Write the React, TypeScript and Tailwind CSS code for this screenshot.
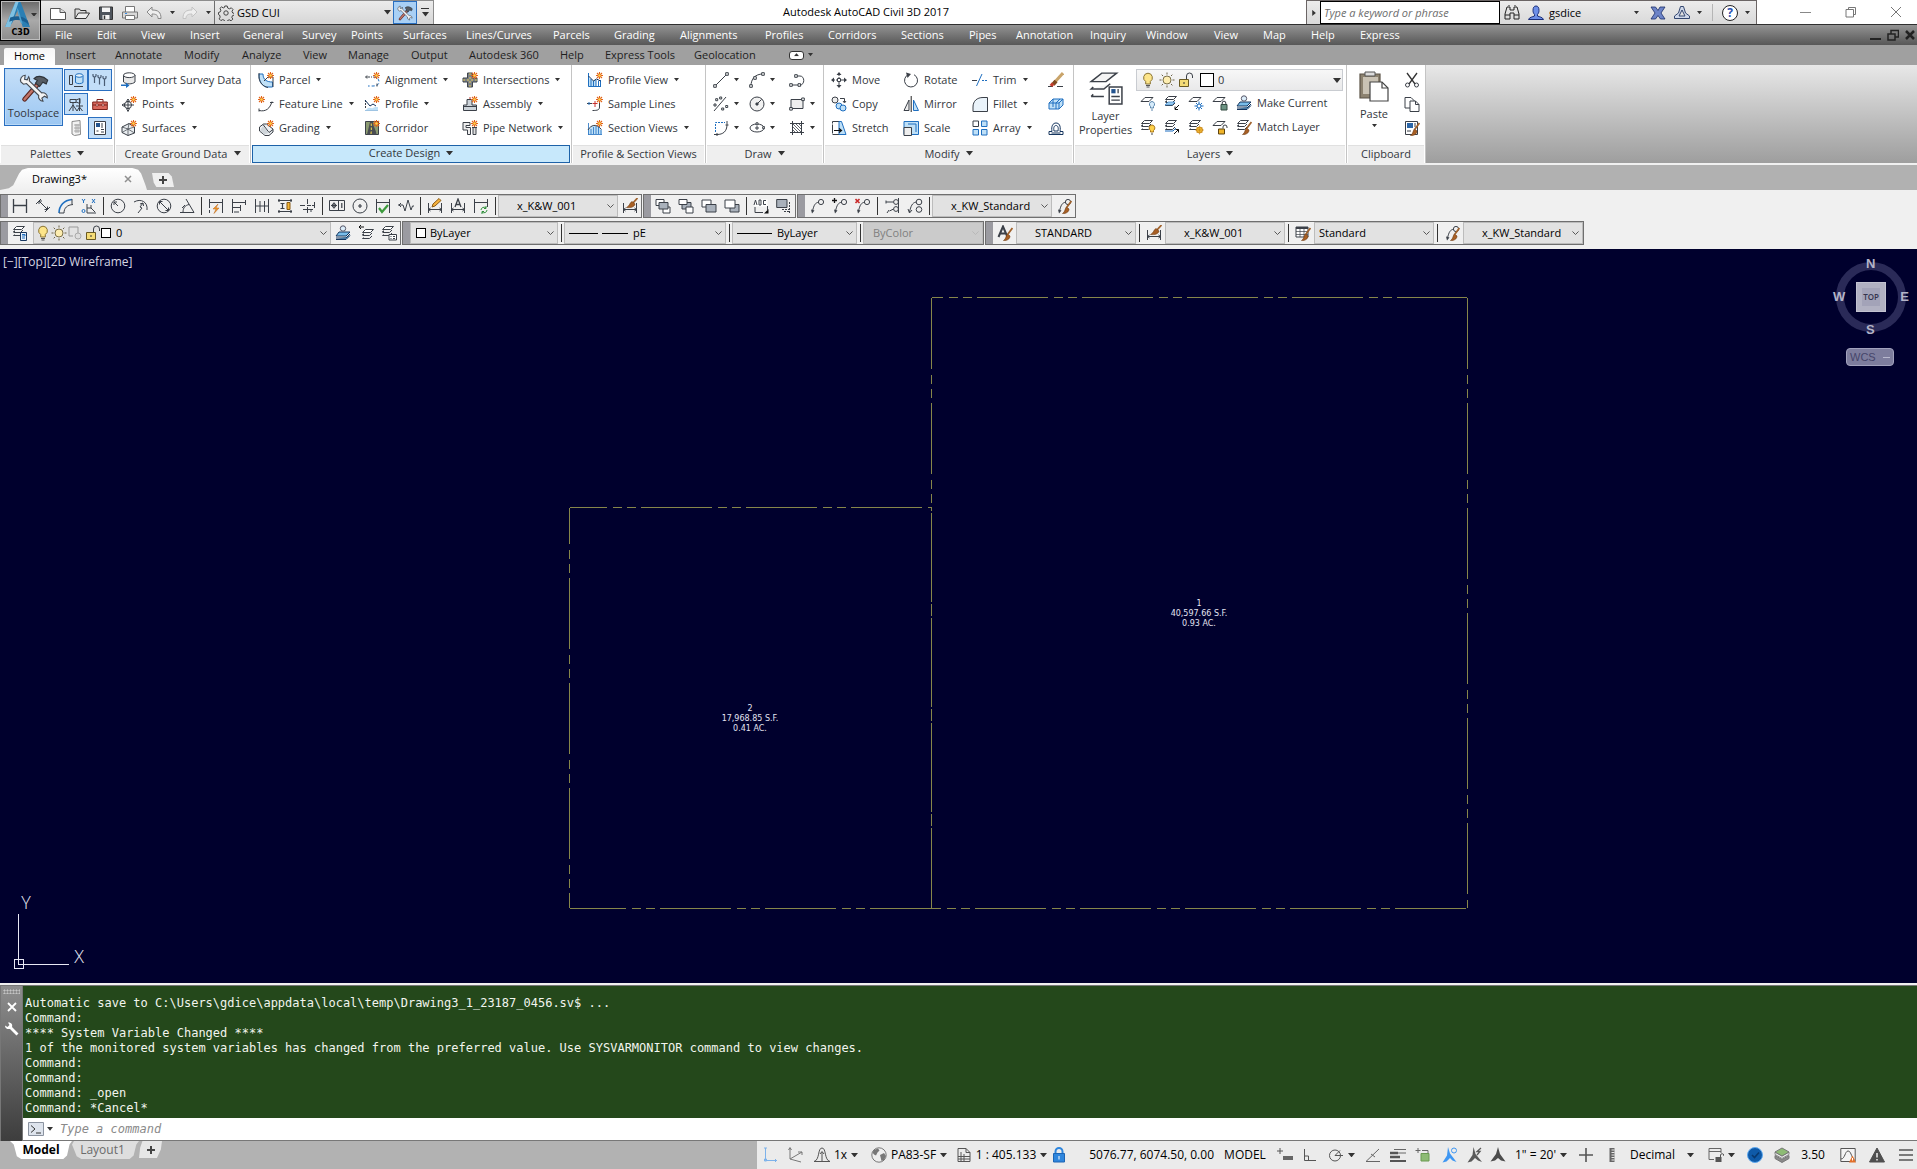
import React from "react";

const D = "#3b4048";
const B = "#1f6fc0";
const L = "#bfe0f7";

/* Orange "new object" burst drawn in the upper right of creation icons. */
const Star = () => (
  <g>
    <path d="M12.5 0v7M9 3.5h7M10 1l5 5M15 1l-5 5" stroke="#e2641a" strokeWidth="1.1" />
    <circle cx="12.5" cy="3.5" r="1.3" fill="#ffd24a" stroke="none" />
  </g>
);

const Sheets = ({ dy = 0 }: { dy?: number }) => (
  <g transform={`translate(0 ${dy})`}>
    <path d="M4.5 2.5h8l-3 3h-8z" fill="#fff" />
    <path d="M3 7.5H1.5l1-1M1.5 8.5h7l2.5-2.5M1.5 11.5h7l2.5-2.5M1.5 11.5l1-1" />
  </g>
);

const Brush = () => (
  <g>
    <path d="M15.5 3L11 9" stroke="#a0622c" strokeWidth="1.8" />
    <path d="M6.5 15.500c3.500 .3 6.500-1.500 6.500-4.500l-2.500-2.200c-1.800 2-1 4.700-4 6.700z" fill="#a85f24" stroke="#6d3a12" strokeWidth=".6" />
  </g>
);

const Key = () => (
  <g>
    <circle cx="12" cy="4" r="2.600" />
    <path d="M9.500 4.200C6 5 5 7 3.500 13" />
    <path d="M2 11.500l1 4 2.500-3z" fill={D} stroke="none" />
  </g>
);

const Dim = () => <path d="M1.500 5v10M14.500 5v10M1.500 11.500h13M3.500 10l-2 1.500 2 1.500M12.500 10l2 1.500-2 1.500" />;

const shapes: Record<string, React.ReactNode> = {
  newFile: <><path d="M.5 3.500H10l5.500 4V14.500H.5z" fill="#fff" stroke="#555" /><path d="M10 3.500v4h5.500" fill="#ddd" stroke="#555" /></>,
  open: <><path d="M1 13.500V4h4.500l1 1.500H12V8" fill="#ddd" stroke="#333" /><path d="M1 13.500L4.500 8H15.500l-3.500 5.500z" fill="#eee" stroke="#333" /></>,
  save: <><path d="M1.500 2h13v12.500h-13z" fill="#4e545c" stroke="#333" /><path d="M4 2.500h8v4.500H4zM4.500 10h7v4.500h-7z" fill="#f4f4f4" stroke="none" /><path d="M6.500 10.500v3.500" stroke="#333" strokeWidth="1.500" /></>,
  print: <><path d="M3.500 7V1.500h9V7" fill="#fff" stroke="#777" /><path d="M.5 7h15v6H.5z" fill="#d8d8d8" stroke="#777" /><path d="M3.500 10.500h9v4h-9z" fill="#fff" stroke="#777" /><path d="M3 8.500h2" stroke="#3a8be0" /></>,
  undo: <path d="M1 7l5-5v3c6 0 9 2 9 8.500h-3c0-3.500-2-4.500-6-4.500v3z" fill="#eee" stroke="#888" />,
  redo: <path d="M15 7l-5-5v3c-6 0-9 2-9 8.500h3c0-3.500 2-4.500 6-4.500v3z" fill="#eee" stroke="#c3c3c3" />,
  gear: <><circle cx="8" cy="8" r="2.200" stroke="#444" /><path d="M6.800 1h2.400l.5 2 1.800.8 1.800-1 1.700 1.700-1 1.800.7 1.700 1.800.5v1.500l-2 .6-.7 1.700 1 1.800-1.700 1.700-1.800-1-1.700.7-.6 1.500H7l-.6-1.700-1.700-.7-1.800 1-1.700-1.700 1-1.800L1.500 10 .5 9.500V7.500l1.700-.6.7-1.700-1-1.800 1.600-1.500 1.800 1 1.200-.5z" stroke="#444" /></>,
  tools: (
    <>
      <path d="M3 14L10 6" stroke="#5a2620" strokeWidth="2.600" strokeLinecap="round" />
      <path d="M3 14L10 6" stroke="#c27468" strokeWidth="1.400" strokeLinecap="round" />
      <path d="M8 3C9.500 1.300 12.500 1.200 15.300 3.800l-.8 2-1.800-.9-1.700 2.300L8.800 5.400 9.800 4z" fill="#565c64" stroke="#2f343a" strokeWidth=".6" />
      <path d="M3.300 1.200A2.600 2.600 0 0 0 1 4.800L2.400 6 4 5.600 10.500 12a2.400 2.400 0 0 0 2.300 3l-.6-1.600 1.400-1 1.500.8a2.400 2.400 0 0 0-3-2.600L5.500 4.200a2.600 2.600 0 0 0-.3-2.200L4.400 3.600 3 3.300z" fill="#f4f4f4" stroke="#444a52" strokeWidth=".6" />
    </>
  ),
  prospector: <><path d="M1.500 3.500h3v9h-3zM6 14.500h9" /><path d="M7.500 3.500v7c2 1.500 5.500 1.500 7.500 0v-7" fill={L} stroke={B} /><ellipse cx="11.200" cy="3.500" rx="3.700" ry="1.800" fill="#e6f4fd" stroke={B} /></>,
  wrenches: <path d="M1 2v2l1.500 1.500L4 4V2M2.500 5.500V11M6 3v2l1.500 1.500L9 5V3M7.500 6.500V12.500M11 4v2l1.500 1.500L14 6V4M12.500 7.500V14" strokeWidth="1.200" stroke="#4a5c74" />,
  survey: <><path d="M2 3.500h6v3H2zM8 4l4-1.500v5L8 6M5 6.500V9M1 15l4-6 4 6M5 9v6M8 10h7M11.500 3v12M9 15l2.500-4 3 4" /></>,
  toolbox: <><path d="M.7 6h14.600v7.500H.7z" fill="#d9685c" stroke="#7d231c" /><path d="M5 6V3.500h6V6M.7 9h14.600" stroke="#7d231c" /><path d="M4 8h2v2H4zM10 8h2v2h-2z" fill="#f7dfda" stroke="#7d231c" strokeWidth=".6" /></>,
  calc: <><path d="M4 1.500l8-1 .5 14-6 1-2.500-1.500z" fill="#f2f2f2" stroke="#888" /><path d="M6 5h6M6 8h6M6 11h6M8 4v9M10 4v9" stroke="#999" strokeWidth=".8" /></>,
  props: <><path d="M2.500 1.500h11v13h-11z" fill="#fff" /><path d="M4 3h4v4H4z" fill="#23548f" stroke="none" /><path d="M10 3v5M4.500 11h2M9 9.500h3M9 12h3" /></>,
  importSurvey: <><path d="M2.500 3v7c2.500 2.500 9 2.500 11.500 0V3" fill="#e8e8e8" /><ellipse cx="8.200" cy="3.200" rx="5.700" ry="2.400" fill="#fff" /><path d="M0 12.500h5v-2l3.500 3L5 16v-2H0z" fill={B} stroke="none" /></>,
  points: <><circle cx="7" cy="9" r="3.500" /><path d="M7 3v12M1 9h12" /><path d="M5.500 5.500L7 3l1.500 2.500zM3.500 7.500L1 9l2.500 1.500zM5.500 12.500L7 15.500l1.500-3z" fill="#fff" /><Star /></>,
  surfaces: <><path d="M1 7l7-3.500 5.500 3.500V13L7 15.500 1 12.500z" fill="#e8ecef" /><path d="M1 7l6 2 6.500-2M7 9v6.500M7 9l1-5.500M1 12.500L7 9l6.500 4" strokeWidth=".7" /><Star /></>,
  parcel: <><path d="M1 2h4c0 6 4 8 9.500 8v5H8C3 13 1 9 1 2z" fill={L} stroke={B} /><path d="M1 1v5c1 5 4 8.500 9 9.500M6 9l4-4h5v10" /><Star /></>,
  featureLine: <><path d="M1 14.500c7 1.500 11-2 13-9M1 12.500v3M12 6.500h3.500" /><g transform="translate(-9 0)"><Star /></g></>,
  grading: <><path d="M1.500 7l4-3h3l6.500 5v3l-4 3.500H7L1.500 11z" fill="#eef1f4" /><path d="M5 4.500l6 8M11 12.500l4-3" /><path d="M5 6l6 7-5 1.500-4-4z" fill="#d0d6db" stroke="none" /><Star /></>,
  alignment: <><path d="M1 5h7" strokeDasharray="2 1" /><path d="M9 5c4 0 6 2 6 5s-3 4-6 4H4" stroke={B} strokeDasharray="3 2" /><path d="M3 3.500v3M13 11.500v3" /><Star /></>,
  profile: <><path d="M1.500 4v9" strokeDasharray="2 1" /><path d="M1 4l5 6 3-2 3 2" stroke="#11315c" /><path d="M2 14c3-4 5-1 7-2 2-1.500 3-1 5-1v4H2z" fill={L} stroke="none" /><path d="M1 14.500h13" stroke="#9ec4e3" /><Star /></>,
  corridor: <><path d="M1.500 1.500h13v13h-13z" fill="#8b9a70" /><path d="M3 14.500L6 2h3c0 5 3 7 3.500 12.500z" fill="#4a4d52" stroke="none" /><path d="M7 14c.5-4 .3-8 .2-11" stroke="#ffe04a" strokeDasharray="2.500 1.500" /><Star /></>,
  intersections: <><path d="M5.500 1v5H1v4h4.500v5h5v-5H15V6h-4.500V1z" fill="#7b8087" stroke="#3f444a" /><path d="M8 1v14M1 8h14" stroke="#ffe04a" strokeDasharray="2 2" strokeWidth=".8" /><Star /></>,
  assembly: <><path d="M8 1v14" stroke="#c23a2c" /><path d="M5 3.500h5V9h4.500v5.500H1.500V9H5z" fill="#cdd4da" /><path d="M1.500 10.500h13" /><Star /></>,
  pipe: <><path d="M1 2.500h7v3H4v2h4.500v7h-3V10H1z" fill="#eee" /><path d="M10 7.500h5M11 7.500v7h3v-7" fill="#ddd" /><Star /></>,
  profileView: <><path d="M1 5l5 4 3-2v7.500H1z" fill={L} stroke="none" /><path d="M1.500 1v13.500H14M4 7v7M6.500 9v5M9 8v6M11.500 9v5M13.500 8v6" stroke={B} /><path d="M1.500 4l5 5 3-2 4 2" stroke="#11315c" /><Star /></>,
  sampleLines: <><path d="M0 7.500h5M12.500 7v4c0 3-2 3.500-7 3.500" /><path d="M5.500 7.500h5M8 5v6" stroke="#c9302c" /><path d="M2 9v-3" stroke={B} /><Star /></>,
  sectionViews: <><path d="M1 14.500V10c2-4.500 6-5 8-5 3 1 5 3 6 6v3.500z" fill={L} stroke="none" /><path d="M1.500 14.500V3M1 14.500h14M4 9v5M6.500 7v7M9 6v8M11.500 7v7M14 10v4" stroke={B} strokeWidth=".8" /><path d="M1 10C4 5 9 3 14.500 9.500" /><Star /></>,
  line: <><path d="M2 14L14 2" /><path d="M.7 12.700h2.600v2.600H.7zM12.700.7h2.600v2.600h-2.600z" fill="#fff" /></>,
  arc: <><path d="M2 14C2 7 6 2 14 2" /><path d="M.7 12.700h2.600v2.600H.7zM12.700.7h2.600v2.600h-2.600zM4.700 4.700h2.600v2.600H4.700z" fill="#fff" /></>,
  polyline: <><path d="M2 13h9c5 0 5-9 0-9H7" /><path d="M.7 11.700h2.600v2.600H.7zM9 11.700h2.600v2.600H9zM5.700 2.700h2.600v2.600H5.700z" fill="#fff" /></>,
  pointsLine: <><path d="M1 15L13 1" /><path d="M2.700 2.700h2v2h-2zM6.700 1h2v2h-2zM12.700 9.500h2v2h-2zM8.700 12h2v2h-2zM1 8h2v2H1z" fill="#fff" /></>,
  circle: <><circle cx="8" cy="8" r="7" fill="#f1f1f1" /><path d="M8 8l4.500-4.500" /><path d="M7 7h2v2H7z" fill={D} /></>,
  rect: <><path d="M2 3.500h12v9H2z" fill="#eee" /><path d="M.7 11.500h2.600v2.600H.7zM12.700 2h2.600v2.600h-2.600z" fill="#fff" /></>,
  curveTools: <><path d="M2.500 12V2.500H12" stroke={B} strokeDasharray="2 1" /><path d="M1 14.500h3c6 0 10-3 10-10V1M12.500 5h3M4 13v3" /></>,
  ellipse: <><ellipse cx="8" cy="8" rx="7" ry="4" /><path d="M8 6v4M6 8h4" /><path d="M13.700 6.700h2v2h-2zM7 2.800h2v2H7z" fill="#fff" /></>,
  hatch: <><path d="M3.500 1v14M12.500 1v14M1 3.500h14M1 12.500h14" /><path d="M4 7l5 5M4 4l8 8M7 4l5 5M4 10l2 2M10 4l2 2" strokeWidth=".8" /></>,
  move: <><path d="M6.500 6.500h3v3h-3z" /><path d="M8 1v5M8 10v5M1 8h5M10 8h5" strokeDasharray="3 1" /><path d="M8 0l2.500 3h-5zM8 16l2.500-3h-5zM0 8l3-2.500v5zM16 8l-3-2.500v5z" fill={D} stroke="none" /></>,
  copy: <><circle cx="4" cy="4" r="3" fill="#eee" /><circle cx="8" cy="10" r="3" fill={L} stroke={B} /><circle cx="12" cy="12" r="3" fill={L} stroke={B} /><path d="M9 2.500h4.500V6M12 5l1.500 2L15 5" /></>,
  stretch: <><path d="M1.500 1.500h8v13h-8z" fill="#fff" strokeDasharray="9 1" /><path d="M8 1.500h2.500l4.500 13H8z" fill={L} stroke={B} /><path d="M3 10.500h7M8 8.500l2.500 2L8 12.500" stroke="#111" strokeWidth="1.200" /></>,
  rotate: <><path d="M5.500 2.500a6.500 6.500 0 1 0 5.500.2" /><path d="M3 .5l5 1.500-3.500 4z" fill={D} stroke="none" /></>,
  mirror: <><path d="M6 4v10.500H1z" fill="#eee" /><path d="M10.500 4v10.500h5z" fill={L} stroke={B} /><path d="M8.200 0v16" stroke="#222" /></>,
  scale: <><path d="M1 1.500h14.500v13H1z" fill={L} stroke={B} /><path d="M1 7.500h7.500v8H1z" fill="#eee" /><path d="M5 4h8v8" stroke={B} /></>,
  trim: <><path d="M0 8.500h5" /><path d="M4.500 14L10 2" stroke={B} /><path d="M10 8.500h6" stroke={B} strokeDasharray="2 1" /></>,
  fillet: <path d="M1 15.500V11C1 5 5 1.500 11 1.500h4.500v14z" fill="#eaf3fa" />,
  array: <><path d="M1 1h5.500v5.500H1z" fill="#fff" /><path d="M9.500 1H15v5.500H9.500zM1 9.500h5.500V15H1zM9.500 9.500H15V15H9.500z" fill={L} stroke={B} /></>,
  erase: <><path d="M0 14.500h5M9 14.500h6" /><path d="M15 1L6 11" stroke="#c9a46a" strokeWidth="3" /><path d="M8 9l-3 3.500" stroke="#7e4a20" strokeWidth="4" /><path d="M5 11.500l-2 2.500" stroke="#c43c2c" strokeWidth="3.500" /></>,
  explode: <><path d="M1 7l4-4h10v6l-4 4H1z" fill={L} stroke={B} /><path d="M1 7h10v6M11 7l4-4M5 3v8M8 13V7l4-4" stroke={B} /></>,
  offset: <path d="M1 14.500h14v-3h-3c1-6-1-8.500-4-8.500S3 6 4 11.500H1zM3.500 13h9M6 11c-.8-4 .5-5.500 2-5.500s2.800 1.500 2 5.500z" stroke="#16365f" />,
  layerProps: <><path d="M6 1h7L8 5H1zM4 8.500H1l1-1M1 8.500h6l3-2.500M1 12h6M1 12l1-1" fill="#f4f4f4" strokeWidth=".7" /><path d="M9.500 7.500h6v8h-6z" fill="#fff" strokeWidth=".7" /><path d="M10.500 8.500h2v2h-2z" fill="#23548f" stroke="none" /><path d="M13.700 8.500v2M10.500 12h4M10.500 13.700h4" strokeWidth=".6" /></>,
  bulb: <><path d="M8 1.200a4.500 4.500 0 0 0-2.300 8.300V12h4.600V9.500A4.500 4.500 0 0 0 8 1.200z" fill="#fde58a" stroke="#8a7434" /><path d="M6 13.500h4M6.500 15h3" stroke="#555" /></>,
  sun: <><circle cx="8" cy="8" r="4" fill="#fdedb0" stroke="#7c7048" /><path d="M8 .5v2M8 13.500v2M.5 8h2M13.500 8h2M2.700 2.700l1.400 1.400M12 12l1.400 1.400M13.300 2.700L12 4M4 12l-1.300 1.300" stroke="#6b6246" /></>,
  unlock: <><path d="M1.500 7.500h9v7h-9z" fill="#f5dc76" stroke="#6a5a22" /><path d="M8.500 7V4a3 3 0 0 1 6 0v2" /><path d="M6 10v2" stroke="#333" /></>,
  vpFreeze: <><path d="M2 2h9v6M2 2v9h4" stroke="#999" /><circle cx="11" cy="11" r="3" fill="#ddd" stroke="#aaa" /></>,
  layOff: <><path d="M5 2.500h8l-4 4H1z" fill="#fff" /><path d="M12 6.500a2.800 2.800 0 0 0-1.500 5V13h3v-1.500a2.800 2.800 0 0 0-1.500-5zM11 15h2" fill="#d7ecfb" stroke="#5a86ad" /></>,
  layIso: <><Sheets dy={-1} /><path d="M4 7h7l-3 3H1z" fill="#9ccdf0" stroke={B} strokeWidth=".6" /><path d="M15 10l-4 4M11 11.500V14.500h3" stroke="#111" /></>,
  layFreeze: <><path d="M5 2.500h8l-4 4H1z" fill="#fff" /><path d="M11 6.500v9M6.500 11h9M8 8l6 6M14 8l-6 6" stroke={B} /><circle cx="11" cy="11" r="2" fill="#fff" stroke={B} /></>,
  layLock: <><path d="M5 2.500h8l-4 4H1z" fill="#fff" /><path d="M9 9.500h6v5.500H9z" fill="#6d9484" stroke="#324a40" /><path d="M10.200 9V8a1.800 1.800 0 0 1 3.600 0v1" /></>,
  makeCurrent: <><path d="M4 7h11l-4 4H1zM1 14.500h10l4-4" fill="#79bdea" stroke="#16365f" /><path d="M1 13h10l4-4" stroke="#16365f" /><circle cx="8" cy="3.500" r="2.700" fill="#dceefb" stroke="#556" /></>,
  layOn: <><Sheets dy={-1} /><path d="M12 6a3 3 0 0 0-1.500 5.500V13h3v-1.500A3 3 0 0 0 12 6z" fill="#ffd24a" stroke="#a8761a" /><path d="M11 15h2" /></>,
  layUniso: <><Sheets dy={-1} /><path d="M1 12h8l3-3" stroke={B} /><path d="M10 15l4.500-4.500M11.500 10.500h3v3" stroke="#111" /></>,
  layThaw: <><Sheets dy={-1} /><circle cx="11.500" cy="11" r="3" fill="#ffc83c" stroke="#c8861a" /><path d="M11.500 6.500v9M7 11h9M8.500 8l6 6M14.500 8l-6 6" stroke="#c8861a" strokeWidth=".6" /></>,
  layUnlock: <><path d="M5 2.500h8l-4 4H1z" fill="#fff" /><path d="M6.500 10h6v5h-6z" fill="#f0b429" stroke="#5e4410" /><path d="M11 9.500V8a2 2 0 0 1 4 0v1" /></>,
  matchLayer: <><Sheets dy={-1} /><Brush /></>,
  paste: <><path d="M1 2h10v12H1z" fill="#8c8270" stroke="#5b5346" strokeWidth=".6" /><path d="M3.500 1h5v2h-5z" fill="#ddd" stroke="#555" strokeWidth=".5" /><path d="M2.500 3.500h7.500V12H2.500z" fill="#c9c2b4" stroke="none" /><path d="M6 6h6l3 3v6.500H6z" fill="#fff" stroke="#444" strokeWidth=".6" /><path d="M12 6v3h3" stroke="#444" strokeWidth=".6" /></>,
  cut: <><path d="M3 1l8 11M13 1L5 12" stroke="#333" strokeWidth="1.300" /><circle cx="3.500" cy="13" r="2" /><circle cx="12.500" cy="13" r="2" /></>,
  copyClip: <><path d="M1 1.500h6l3 3V12H1z" fill="#fff" /><path d="M6 5h5.500l3.500 3.500v7H6z" fill="#fff" /><path d="M11.500 5v3.500H15" /></>,
  pasteSpec: <><path d="M1.500 1.500h12v13h-12z" fill="#fff" /><path d="M3 3h6v5H3z" fill="#2b66a8" stroke="none" /><path d="M11 3v4M3 11h4" /><Brush /></>,
  dimLinear: <path d="M1.500 1v14M14.500 1v14M2 7.500h12" strokeWidth="1.300" />,
  dimAligned: <path d="M4 3l8.500 8.500M1 6l5-5M10 14l5-5M4 3v3M4 3h3M12.500 11.500v-3M12.500 11.500h-3" />,
  dimArc: <><path d="M1 15C1 8 6 2 14 1.500" stroke={B} strokeWidth="1.600" /><path d="M6 15c0-5 3-8 9-8.500M1 15h5M14 1v5" /></>,
  dimOrd: <><path d="M1 1l1.500 2L4 1M2.500 3v2M11 1l3 4M14 1l-3 4" stroke={B} /><circle cx="2.500" cy="13" r="1.500" stroke={B} /><path d="M6 6v9h9M6 10h4v-3M10 10l4 4" /></>,
  dimRadius: <><circle cx="8" cy="8" r="6.800" /><path d="M8 8L4 4M4 7V4h3" /></>,
  dimJog: <path d="M1 4c7-4 14 0 13 8M5 15l4-5-2-1 3-4M7 6l3-1 .5 3" />,
  dimDia: <><circle cx="8" cy="8" r="6.800" /><path d="M3.500 3.500l9 9M3.500 6.500v-3h3M12.500 9.500v3h-3" /></>,
  dimAng: <path d="M1 14.500h14L7 1M4 14.500c0-5 2-7 6-8M3 10l3-3" />,
  quickDim: <><path d="M1.500 1v9M14.500 1v14M1.500 4.500h13M1.500 12v3" /><path d="M10 6l-5 5h3l-2 4.500 5-5.500H8z" fill="#f2992a" stroke="#b8641a" strokeWidth=".5" /></>,
  dimBase: <path d="M1.500 1v14M1.500 4.500h13M1.500 9.500h8M9.500 7v6M14.500 2v5M3 14h5" />,
  dimCont: <path d="M1.500 1v14M6 3v11M10.500 3v11M14.500 1v14M1 8h14" />,
  dimSpace: <><path d="M1 2.500h14M1 13.500h14M2 1v3M14 1v3M2 12v3M14 12v3M3.500 5.500h4M5.500 5.500v5M3.500 10.500h4" strokeWidth="1.200" /><path d="M10 4.500h3v7h-3z" fill="#f2b434" stroke="#8a5a12" /></>,
  dimBreak: <path d="M0 7.500h5M7 7.500h4M12 7.500h3M7.500 1v5M7.500 9v6M11 11v3M3 11.500h10M14.500 4v6" />,
  tolerance: <><path d="M.5 2.500h15v10H.5zM9.500 2.500v10" /><circle cx="5" cy="7.500" r="1.900" /><path d="M5 4.500v6M2 7.500h6M12.800 5v5" strokeWidth="1.200" /></>,
  center: <><circle cx="8" cy="8" r="7" /><path d="M8 6v4M6 8h4" strokeWidth="1.200" /></>,
  inspect: <><path d="M1.500 1v14M14.500 1v14M1.500 4.500h13" /><path d="M4 10l3 4 6-7" stroke="#3c9a3c" strokeWidth="2.200" /></>,
  jogged: <path d="M0 7h5l2 6 3-11 3 10 1.500-4H16M3 5L1 7l2 2" />,
  dimEdit: <><Dim /><path d="M5 9l1-3 6-5.500 2 2L8 8z" fill="#f6b23e" stroke="#8a5a12" /></>,
  dimText: <><Dim /><path d="M5 9l3-8 3 8M6 6.500h4" strokeWidth="1.300" /></>,
  dimUpdate: <><path d="M1.500 1v14M14.500 1v8M1.500 4.500h13" /><path d="M8 12a3 3 0 0 1 5-2M14 12a3 3 0 0 1-5 2M13 8v2.500h-2M9 16v-2.500h2" stroke="#2f8f3a" /></>,
  dimStyle: <><Dim /><path d="M15.500 0L11 5" stroke="#a0622c" strokeWidth="1.800" /><path d="M4.500 9.500c4 .5 8-.5 8.500-3.500L10 3.500c-2.500 1-2 4.500-5.500 6z" fill="#a85f24" stroke="#6d3a12" strokeWidth=".6" /></>,
  front: <><path d="M1 1.500h8v6H1zM8 9h7v6H8z" fill="#fff" /><path d="M4 4.500h9v6.500H4z" fill="#a9b1bb" /></>,
  back: <><path d="M4 4.500h9v6.500H4z" fill="#a9b1bb" /><path d="M1 1.500h8v5H1zM8 9h7v6H8z" fill="#fff" /></>,
  above: <><path d="M1 2h9v7H1z" fill="#fff" /><path d="M5 6.500h10v7.500H5z" fill="#a9b1bb" /></>,
  under: <><path d="M6 6.500h9v7.500H6z" fill="#a9b1bb" /><path d="M1 2h10v8H1z" fill="#fff" /></>,
  textFront: <><path d="M1.500 1.500h13v7h-13z" fill="#fff" stroke="none" /><path d="M1 7l1.500-5L4 7M6 2v5h2V2zM13 2.500h-2.500v4H13M2 9v5.500h8M14.500 8v4" /><path d="M11 15.500h4.500V11z" fill="#111" stroke="none" /></>,
  hatchBack: <><path d="M.7 1.500H11v8H.7z" fill="#a9b1bb" /><path d="M6 11.500h9M13.500 4v11M8 13.500h5" strokeDasharray="2 1" /></>,
  leader: <Key />,
  leaderAdd: <><Key /><path d="M2.500 0v5M0 2.500h5" stroke="#111" strokeWidth="1.300" /></>,
  leaderDel: <><Key /><path d="M.5 1l4 4M4.500 1l-4 4" stroke="#c92a2a" strokeWidth="1.600" /></>,
  leaderAlign: <><circle cx="12" cy="4" r="2.400" /><circle cx="12" cy="11" r="2.400" /><path d="M14.500 0v15M9.500 4H2M9.500 11l-4 2M2 2.500v3M5 12l-2 3" /></>,
  leaderCollect: <><circle cx="12" cy="4" r="2.800" /><circle cx="12" cy="11.500" r="2.800" /><path d="M9 4C5 5 4 8 2.500 14M1 11l1.500 4L5 12" /></>,
  leaderStyle: <><Key /><Brush /></>,
  layerMgr: <><Sheets dy={-1} /><path d="M8.500 7.500h6v8h-6z" fill="#e9f2fb" stroke="#16365f" /><path d="M10 9.500h3v1.500h-3M10 13h3" stroke={B} /></>,
  layPrev: <><g transform="translate(3 2)"><Sheets /></g><path d="M6 2H1M3 0L1 2l2 2" stroke="#111" /></>,
  layStates: <><Sheets dy={-1} /><path d="M8 9.500h7.500V15H8z" fill="#fff" /><path d="M9.500 11.500h1M12 11.500h2M9.500 13.500h1M12 13.500h2" /></>,
  textStyle: <><path d="M1.500 12L6 1.500 10.500 12M3 8.500h6" strokeWidth="2" /><Brush /></>,
  tableStyle: <><path d="M1 2h12v10H1z" fill="#fff" /><path d="M1 3h12" strokeWidth="2" /><path d="M1 6.500h12M1 9.500h12M5 4v8M9 4v8" strokeWidth=".7" /><Brush /></>,
  binoculars: <path d="M3 2h3v3h4V2h3l2 7v5h-5V8H6v6H1V9zM1 10h5M10 10h5M4 0h2M10 0h2" stroke="#222" />,
  user: <path d="M5 5.500C5 2.500 6 1 8 1s3 1.500 3 4.500c0 2-.7 3-1.500 4v1.500c2 1 5 1 6 3.500H.5c1-2.500 4-2.500 6-3.500V9.500C5.700 8.500 5 7.500 5 5.500z" fill="#6d8fe8" stroke="#1b2f7a" />,
  exchange: <path d="M1 2h4.500l2.500 3.500L10 2h5l-4 6 4 6h-4.500L8 10.500 5.500 14H1l4-6z" fill="#6d84c8" stroke="#1b2f6a" strokeWidth=".8" />,
  app360: <path d="M6.500 1.500h3l2 6.500 4 3v2.500H.5V11l4-3zM8 5l-3 6h6z" fill="#cfd8ea" stroke="#33466f" />,
  ucs: <path d="M3.500 1v12.500H15M2 1h3M13.500 12v3M2.500 12h2v2h-2z" stroke="#7db2ea" />,
  ucsIso: <path d="M3 1v11l11 3M3 12L15 5M11 5h4v3M1.500 3L3 .5 4.500 3" stroke="#777" />,
  aniso: <path d="M0 14.500C6 13 3.500 1 8 1s2 12 8 13.500zM8 14V5M6 7l2-2.500L10 7" stroke="#555" />,
  globe: <><circle cx="8" cy="8" r="7.200" fill="#eee" stroke="#777" /><path d="M3 3l4-1.500 1.500 2L6.500 5.500 5 8.500 3 7.500 1.500 5.500zM9 8l4-2 2 3-2 4-2.500 1z" fill="#777" stroke="none" /></>,
  sheet: <path d="M2 1.500h8l4 4v9H2zM10 1.500v4h4M5 5v9M8 7v8M2 9.500h12M2 12h12" stroke="#555" />,
  lock: <><path d="M2.500 6.500h11V15h-11z" fill="#2f86dd" stroke="#1c65b4" /><path d="M4.500 6V4.500a3.500 3.500 0 0 1 7 0V6" stroke="#2f86dd" strokeWidth="2" /><path d="M8 9v3.500" stroke="#fff" /></>,
  dyn: <><path d="M3 1v6M0 4h6" stroke="#555" /><path d="M6 9h10v4H6z" fill="#666" stroke="none" /></>,
  ortho: <path d="M2.500 2v11.500H14M2.500 9h4v4" stroke="#555" />,
  polar: <><circle cx="7" cy="8.500" r="5.500" stroke="#555" /><path d="M7 8.500l5-5M7 8.500h8" stroke="#555" /></>,
  otrack: <path d="M1 14.500h14M1 14.500L14 2M6 7l4 3" stroke="#666" />,
  lwt: <><path d="M4 2.500h12M4 6h12M0 14h16" stroke="#666" /><path d="M0 6h8M0 10h10" stroke="#555" strokeWidth="2.400" /><path d="M0 14h16" stroke="#555" strokeWidth="2" /></>,
  cycling: <><path d="M3 1v5M.5 3.500h5M7 3.500h6v4" stroke="#666" /><path d="M6 6.500h8V14H6z" fill="#8dbb74" stroke="#6a9a52" /></>,
  annoBlue: <><path d="M6 0l2 6.500L14.500 15l-4-1.500L8 11l-3.500 3.500L.5 15.500 5 8.500z" fill="#3f97f2" stroke="none" /><circle cx="12" cy="3.500" r="2.500" stroke="#3f97f2" /></>,
  annoAuto: <><path d="M6.500 0l2 7L15 15l-4-1.500L8 11l-3.500 3.500L.5 15.500 5.500 8z" fill="#5a5a5a" stroke="none" /><path d="M14 1l-4 3.500h3L10 8" stroke="#5a5a5a" strokeWidth="1.300" /></>,
  anno: <path d="M8 0l2 7 5.500 7.500L11 13.500 8 11l-3 2.500L.5 14.500 6 7z" fill="#4c4c4c" stroke="none" />,
  plus: <path d="M8 1v14M1 8h14" stroke="#555" strokeWidth="1.600" />,
  ruler: <><path d="M5.500 1h5v14h-5z" fill="#666" stroke="none" /><path d="M7.500 3h3M7.500 5.500h3M7.500 8h3M7.500 10.500h3M7.500 13h3" stroke="#e8e8e8" /></>,
  quickProps: <><path d="M1 1.500h12V6M1 1.500v11h5M1 4.500h12" stroke="#666" /><path d="M7.500 10h6v5h-6z" fill="#555" stroke="none" /><path d="M12.500 10V8a1.700 1.700 0 0 1 3.300 0v1" stroke="#555" /></>,
  graphics: <><circle cx="8" cy="8" r="7.500" fill="#0f5aa8" stroke="#5fa9ef" /><path d="M5 8l2.500 2.500L12 5.500" stroke="#08386e" strokeWidth="1.600" /></>,
  layersStack: <><path d="M1 8.500v3l7 4 7-4v-3l-7 4z" fill="#8a8a8a" stroke="#777" /><path d="M1 5v2.500l7 4 7-4V5l-7 4z" fill="#e6e6e6" stroke="#888" /><path d="M1 5l7-4 7 4-7 4z" fill="#8dbb74" stroke="#777" /></>,
  graph: <><path d="M.8 1.500h14.400v13H.8z" fill="#f4f4f4" stroke="#555" /><path d="M1 12C5 12 5 4 8 4s3 5 6 9" stroke="#555" /><path d="M12.500 8.500l3.500 7H9z" fill="#e2702a" stroke="none" /><path d="M12.500 11v2.500" stroke="#fff" /></>,
  warn: <><path d="M8 1l7.500 14H.5z" fill="#4f4f4f" stroke="#4f4f4f" /><path d="M8 6v4.500M8 12v1.500" stroke="#eee" strokeWidth="1.500" /></>,
  menu: <path d="M1 3h14M1 8h14M1 13h14" stroke="#555" strokeWidth="1.500" />,
  wrench: <path d="M1 4.500L3.500 6 5.500 4 4 1.500C7 1 9 3.500 8 6l6.500 6.500-2 2L6 8C3.500 8.500 1 7.500 1 4.500z" fill="#fff" stroke="none" />,
};

function Icon({ name, size = "size-4" }: { name: string; size?: string }) {
  return (
    <svg viewBox="0 0 16 16" className={`${size} flex-none`} fill="none" stroke={D} strokeWidth="1" aria-hidden="true">
      {shapes[name]}
    </svg>
  );
}

function Tri({ size = "w-[7px]" }: { size?: string }) {
  return (
    <svg viewBox="0 0 8 5" className={`${size} flex-none`} aria-hidden="true">
      <path d="M0 0h8L4 5z" fill="#333" />
    </svg>
  );
}

/* ---------- Title bar ---------- */

function IconButton({ name, label, className = "w-6" }: { name: string; label: string; className?: string }) {
  return (
    <button aria-label={label} title={label} className={`flex flex-none items-center justify-center ${className}`}>
      <Icon name={name} />
    </button>
  );
}

function ArrowButton({ label, className }: { label: string; className: string }) {
  return (
    <button aria-label={label} className={`flex flex-none items-center justify-center ${className}`}>
      <Tri size="w-[5px]" />
    </button>
  );
}

function TitleBar() {
  return (
    <header className="relative flex h-[25px] items-stretch border-b border-[#2f2f2f] bg-white">
      <button
        aria-label="Application menu"
        className="absolute left-0 top-0 z-10 flex h-[41px] w-[41px] flex-col items-center border border-black bg-linear-to-b from-[#6a6a6a] via-[#a9a9a9] to-[#8c8c8c] shadow-[inset_0_0_0_1px_#bdbdbd]"
      >
        <span className="flex items-center">
          <svg viewBox="0 0 26 26" className="size-[27px]" aria-hidden="true">
            <path d="M11 1h5l9 24h-7l-5-16-5 12-3 4H1z" fill="#2a7fb4" />
            <path d="M11 1h3L6 25H1z" fill="#7fc1e2" />
            <path d="M6 16c6-2 12-2 17 3l1 4c-5-5-12-6-19-3z" fill="#1a5f92" />
            <path d="M12 6l2 3 4 13-2-1z" fill="#4fa4d2" />
          </svg>
          <Tri size="w-[6px]" />
        </span>
        <span className="font-['DejaVu_Sans',sans-serif] text-[8px] font-bold leading-[10px] text-black">C3D</span>
      </button>
      <div className="ml-[41px] flex items-stretch border-r border-t border-[#8d8d8d] bg-linear-to-b from-[#ececec] to-[#d6d6d6] pl-[5px]">
        <IconButton name="newFile" label="New" />
        <IconButton name="open" label="Open" />
        <IconButton name="save" label="Save" />
        <IconButton name="print" label="Plot" />
        <IconButton name="undo" label="Undo" />
        <ArrowButton label="Undo list" className="w-3" />
        <IconButton name="redo" label="Redo" />
        <ArrowButton label="Redo list" className="w-3" />
        <label className="flex w-[179px] items-center border-l border-[#6e6e6e] pl-[3px]">
          <Icon name="gear" />
          <select aria-label="Workspace" className="min-w-0 flex-1 appearance-none bg-transparent pl-[3px] text-black outline-none">
            <option>GSD CUI</option>
          </select>
          <span className="mr-[2px] flex"><Tri /></span>
        </label>
        <button aria-label="Toolspace" className="flex w-6 items-center justify-center border border-[#2a6fc0] bg-[#a9d0f5]">
          <Icon name="tools" />
        </button>
        <button aria-label="Customize quick access" className="flex w-4 flex-col items-center justify-center gap-[3px]">
          <span className="h-px w-2 bg-[#333]" />
          <Tri />
        </button>
      </div>
      <h1 className="flex flex-1 items-center justify-center pr-2 text-black">Autodesk AutoCAD Civil 3D 2017</h1>
      <div className="flex items-stretch border border-b-0 border-[#6b6565] bg-linear-to-b from-[#ececec] to-[#d9d9d9]">
        <button aria-label="Collapse search" className="flex w-[13px] items-center justify-center">
          <span className="-rotate-90"><Tri size="w-[6px]" /></span>
        </button>
        <input
          aria-label="Search"
          placeholder="Type a keyword or phrase"
          className="w-[180px] border border-black bg-white px-[3px] italic outline-none placeholder:text-[#6d6d6d]"
        />
        <IconButton name="binoculars" label="Search" />
        <button className="flex w-[115px] items-center gap-[5px] pl-1 text-black">
          <Icon name="user" />
          <span className="flex-1 text-left">gsdice</span>
          <Tri size="w-[5px]" />
        </button>
        <IconButton name="exchange" label="Exchange apps" className="ml-[7px] w-6" />
        <IconButton name="app360" label="Autodesk 360" />
        <ArrowButton label="Autodesk 360 menu" className="w-[10px]" />
        <span className="mx-2 my-[3px] w-px bg-[#b5b5b5]" />
        <button aria-label="Help" className="flex w-[18px] items-center justify-center">
          <span className="flex size-4 items-center justify-center rounded-full border border-[#222] bg-white text-xs font-bold leading-none text-[#2a50b0]">?</span>
        </button>
        <ArrowButton label="Help menu" className="w-[17px]" />
      </div>
      <div className="flex w-[160px] items-center justify-between pl-[42px] pr-[15px]">
        <button aria-label="Minimize"><svg viewBox="0 0 12 12" className="size-3"><path d="M1 6.500h11" stroke="#888" fill="none" /></svg></button>
        <button aria-label="Restore"><svg viewBox="0 0 12 12" className="size-3"><path d="M1 3.500h7.500V11H1zM3.500 3.500v-2h7v7h-2" stroke="#777" fill="none" /></svg></button>
        <button aria-label="Close"><svg viewBox="0 0 12 12" className="size-3"><path d="M1 1l10 10M11 1L1 11" stroke="#777" fill="none" /></svg></button>
      </div>
    </header>
  );
}

/* ---------- Menus and ribbon tabs ---------- */

const menus: [string, string][] = [
  ["File", "w-[42px]"], ["Edit", "w-[44px]"], ["View", "w-[49px]"], ["Insert", "w-[53px]"], ["General", "w-[59px]"],
  ["Survey", "w-[49px]"], ["Points", "w-[52px]"], ["Surfaces", "w-[63px]"], ["Lines/Curves", "w-[87px]"],
  ["Parcels", "w-[61px]"], ["Grading", "w-[66px]"], ["Alignments", "w-[85px]"], ["Profiles", "w-[63px]"],
  ["Corridors", "w-[73px]"], ["Sections", "w-[68px]"], ["Pipes", "w-[47px]"], ["Annotation", "w-[74px]"],
  ["Inquiry", "w-[56px]"], ["Window", "w-[68px]"], ["View", "w-[49px]"], ["Map", "w-[48px]"], ["Help", "w-[49px]"],
  ["Express", "w-[48px]"],
];

function MenuBar() {
  return (
    <nav className="flex h-5 items-center bg-linear-to-b from-[#949494] to-[#575757] pl-[55px] text-white">
      {menus.map(([m, w], i) => (
        <button key={i} className={`${w} flex-none whitespace-nowrap text-left`}>{m}</button>
      ))}
      <div className="ml-auto flex items-center gap-[6px] pr-[2px]">
        <button aria-label="Minimize drawing"><svg viewBox="0 0 11 11" className="size-[11px]"><path d="M0 9h11" stroke="#222" strokeWidth="2" /></svg></button>
        <button aria-label="Restore drawing"><svg viewBox="0 0 12 12" className="size-3"><path d="M1 5h7v6H1zM4 5V1.500h7.500V8H8" stroke="#222" strokeWidth="1.500" fill="none" /></svg></button>
        <button aria-label="Close drawing"><svg viewBox="0 0 10 10" className="size-[10px]"><path d="M1 1l8 8M9 1L1 9" stroke="#222" strokeWidth="2.500" /></svg></button>
      </div>
    </nav>
  );
}

const tabs: [string, string][] = [
  ["Insert", "w-[49px]"], ["Annotate", "w-[69px]"], ["Modify", "w-[58px]"], ["Analyze", "w-[61px]"], ["View", "w-[45px]"],
  ["Manage", "w-[63px]"], ["Output", "w-[58px]"], ["Autodesk 360", "w-[91px]"], ["Help", "w-[45px]"],
  ["Express Tools", "w-[89px]"], ["Geolocation", "w-[95px]"],
];

function RibbonTabs() {
  return (
    <nav className="flex h-5 items-stretch bg-[#a0a0a0] pl-1 text-[#1e1e1e]">
      <button className="mr-[11px] mt-[3px] w-[51px] rounded-t-[2px] bg-linear-to-b from-[#f6f6f6] to-white pb-[2px] text-black">Home</button>
      {tabs.map(([t, w]) => (
        <button key={t} className={`${w} flex-none whitespace-nowrap text-left`}>{t}</button>
      ))}
      <button aria-label="Minimize ribbon" className="flex items-center gap-1">
        <span className="flex h-[9px] w-[15px] items-center justify-center rounded-[3px] border border-[#333] bg-white"><span className="flex rotate-180"><Tri size="w-[5px]" /></span></span>
        <Tri size="w-[5px]" />
      </button>
    </nav>
  );
}

/* ---------- Ribbon ---------- */

function Cmd({ icon, label, menu }: { icon: string; label: string; menu?: boolean }) {
  return (
    <button className="flex h-6 items-center gap-[5px] whitespace-nowrap text-left">
      <Icon name={icon} />
      <span>{label}</span>
      {menu && <Tri size="ml-px w-[5px]" />}
    </button>
  );
}

function Panel({ title, width, menu, active, children }: { title: string; width: string; menu?: boolean; active?: boolean; children: React.ReactNode }) {
  return (
    <section className={`${width} flex flex-none flex-col border-r border-[#c4c4c4] bg-white`}>
      <div className="flex h-20 pt-[3px]">{children}</div>
      <button
        className={`mx-px flex h-[18px] items-center justify-center gap-[6px] whitespace-nowrap pb-[2px] ${active ? "border border-[#1d62a8] bg-[#c7e8fb]" : "border-t border-[#e0e0e0] bg-[#efefef]"}`}
      >
        {title}
        {menu && <Tri />}
      </button>
    </section>
  );
}

function Small({ name, label, on }: { name: string; label: string; on?: boolean }) {
  return (
    <button aria-label={label} className={`flex h-[22px] w-6 items-center justify-center ${on ? "border border-[#2a6fc0] bg-[#c3def8]" : ""}`}>
      <Icon name={name} />
    </button>
  );
}

function DrawTool({ name, label, menu, width }: { name: string; label: string; menu?: boolean; width: string }) {
  return (
    <div className={`flex h-6 items-center ${width}`}>
      <button aria-label={label}><Icon name={name} /></button>
      {menu && <button aria-label={`${label} options`} className="ml-[5px] flex"><Tri size="w-[5px]" /></button>}
    </div>
  );
}

const layerTools: [string, string][][] = [
  [["layOff", "Off"], ["layIso", "Isolate"], ["layFreeze", "Freeze"], ["layLock", "Lock"]],
  [["layOn", "Turn all on"], ["layUniso", "Unisolate"], ["layThaw", "Thaw all"], ["layUnlock", "Unlock"]],
];

function Ribbon() {
  return (
    <div className="flex h-[100px] items-stretch border-b-2 border-[#f0f0f0] bg-linear-to-b from-[#e8e8e8] to-[#9e9e9e] text-[#33373d]">
      <Panel title="Palettes" width="w-[115px]" menu>
        <button className="ml-1 flex h-[58px] w-[59px] flex-col items-center border border-[#2a6fc0] bg-linear-to-b from-[#c5dff8] to-[#9cc7f2] pt-1 shadow-[inset_0_0_0_1px_#b9d9f7]">
          <Icon name="tools" size="size-[30px]" />
          <span className="mt-[2px]">Toolspace</span>
        </button>
        <div className="ml-px mt-px grid h-[70px] grid-cols-2 content-between">
          <Small name="prospector" label="Prospector" on />
          <Small name="wrenches" label="Settings" on />
          <Small name="survey" label="Survey" on />
          <Small name="toolbox" label="Toolbox" />
          <Small name="calc" label="Calculator" />
          <Small name="props" label="Properties" on />
        </div>
      </Panel>
      <Panel title="Create Ground Data" width="w-[136px]" menu>
        <div className="ml-[6px] flex flex-col">
          <Cmd icon="importSurvey" label="Import Survey Data" />
          <Cmd icon="points" label="Points" menu />
          <Cmd icon="surfaces" label="Surfaces" menu />
        </div>
      </Panel>
      <Panel title="Create Design" width="w-[321px]" menu active>
        <div className="ml-[7px] flex w-[106px] flex-col">
          <Cmd icon="parcel" label="Parcel" menu />
          <Cmd icon="featureLine" label="Feature Line" menu />
          <Cmd icon="grading" label="Grading" menu />
        </div>
        <div className="flex w-[98px] flex-col">
          <Cmd icon="alignment" label="Alignment" menu />
          <Cmd icon="profile" label="Profile" menu />
          <Cmd icon="corridor" label="Corridor" />
        </div>
        <div className="flex flex-col">
          <Cmd icon="intersections" label="Intersections" menu />
          <Cmd icon="assembly" label="Assembly" menu />
          <Cmd icon="pipe" label="Pipe Network" menu />
        </div>
      </Panel>
      <Panel title="Profile & Section Views" width="w-[134px]">
        <div className="ml-[15px] flex flex-col">
          <Cmd icon="profileView" label="Profile View" menu />
          <Cmd icon="sampleLines" label="Sample Lines" />
          <Cmd icon="sectionViews" label="Section Views" menu />
        </div>
      </Panel>
      <Panel title="Draw" width="w-[118px]" menu>
        <div className="ml-[7px] flex h-[72px] flex-wrap">
          <DrawTool name="line" label="Line" menu width="w-9" />
          <DrawTool name="arc" label="Arc" menu width="w-10" />
          <DrawTool name="polyline" label="Polyline" width="w-8" />
          <DrawTool name="pointsLine" label="Line by points" menu width="w-9" />
          <DrawTool name="circle" label="Circle" menu width="w-10" />
          <DrawTool name="rect" label="Rectangle" menu width="w-8" />
          <DrawTool name="curveTools" label="Curves" menu width="w-9" />
          <DrawTool name="ellipse" label="Ellipse" menu width="w-10" />
          <DrawTool name="hatch" label="Hatch" menu width="w-8" />
        </div>
      </Panel>
      <Panel title="Modify" width="w-[250px]" menu>
        <div className="ml-[7px] flex w-[72px] flex-col">
          <Cmd icon="move" label="Move" />
          <Cmd icon="copy" label="Copy" />
          <Cmd icon="stretch" label="Stretch" />
        </div>
        <div className="flex w-[69px] flex-col">
          <Cmd icon="rotate" label="Rotate" />
          <Cmd icon="mirror" label="Mirror" />
          <Cmd icon="scale" label="Scale" />
        </div>
        <div className="flex w-[60px] flex-col">
          <Cmd icon="trim" label="Trim" menu />
          <Cmd icon="fillet" label="Fillet" menu />
          <Cmd icon="array" label="Array" menu />
        </div>
        <div className="ml-3 flex flex-col">
          <IconButton name="erase" label="Erase" className="size-6" />
          <IconButton name="explode" label="Explode" className="size-6" />
          <IconButton name="offset" label="Offset" className="size-6" />
        </div>
      </Panel>
      <Panel title="Layers" width="w-[273px]" menu>
        <button className="flex w-[62px] flex-none flex-col items-center pl-px pt-[3px] leading-[14px]">
          <Icon name="layerProps" size="size-[34px]" />
          <span className="mt-1">Layer</span>
          <span>Properties</span>
        </button>
        <div className="flex flex-1 flex-col pr-[3px]">
          <label className="mt-px flex h-[22px] items-center gap-[3px] border border-[#c9ccd1] bg-linear-to-b from-[#f7f7f7] to-[#e9e9ea] pl-[3px]">
            <Icon name="bulb" />
            <Icon name="sun" />
            <Icon name="unlock" />
            <span className="ml-[3px] size-[14px] border border-black bg-white" />
            <select aria-label="Current layer" className="min-w-0 flex-1 appearance-none bg-transparent pl-px outline-none">
              <option>0</option>
            </select>
            <span className="mr-[1px] flex"><Tri size="w-[8px]" /></span>
          </label>
          {layerTools.map((row, i) => (
            <div key={i} className="flex h-6 items-center">
              {row.map(([n, l]) => <IconButton key={n} name={n} label={l} />)}
              <span className="ml-1 flex">{i === 0 ? <Cmd icon="makeCurrent" label="Make Current" /> : <Cmd icon="matchLayer" label="Match Layer" />}</span>
            </div>
          ))}
        </div>
      </Panel>
      <Panel title="Clipboard" width="w-[79px]">
        <button className="ml-2 flex w-[38px] flex-col items-center pt-[2px]">
          <Icon name="paste" size="size-[32px]" />
          <span className="mt-1">Paste</span>
          <span className="mt-[2px]"><Tri size="w-[5px]" /></span>
        </button>
        <div className="ml-[7px] flex flex-col">
          <IconButton name="cut" label="Cut" className="size-6" />
          <IconButton name="copyClip" label="Copy clip" className="size-6" />
          <IconButton name="pasteSpec" label="Match properties" className="size-6" />
        </div>
      </Panel>
    </div>
  );
}

function FileTabs() {
  return (
    <div className="flex h-[25px] items-end bg-[#b1b1b1] text-black">
      <div className="flex h-[22px] w-[147px] items-center justify-between bg-linear-to-b from-white to-[#f0f0f0] pl-8 pr-[15px] [clip-path:polygon(0_100%,6%_92%,9%_78%,13%_25%,15%_8%,19%_0,90%_0,94%_8%,96%_25%,99%_78%,100%_100%)]">
        <button>Drawing3*</button>
        <button aria-label="Close Drawing3">
          <svg viewBox="0 0 8 8" className="size-2"><path d="M1 1l6 6M7 1L1 7" stroke="#8f8f8f" strokeWidth="1.500" /></svg>
        </button>
      </div>
      <button aria-label="New drawing" className="mb-[3px] ml-[5px] flex h-[14px] w-[22px] items-center justify-center bg-[#efefef] [clip-path:polygon(0_0,75%_0,90%_25%,100%_100%,20%_100%,8%_70%)]">
        <svg viewBox="0 0 8 8" className="size-2"><path d="M4 0v8M0 4h8" stroke="#444" strokeWidth="2" /></svg>
      </button>
    </div>
  );
}

/* ---------- Docked toolbars ---------- */

function Toolbar({ label, children }: { label: string; children: React.ReactNode }) {
  return (
    <div role="toolbar" aria-label={label} className="flex h-6 flex-none items-stretch border border-[#6f6f6f] bg-[#f0f0f0]">
      <span className="flex w-[7px] items-center justify-center bg-[#9b9ba1]">
        <span className="h-[14px] w-[5px] bg-[radial-gradient(#222_35%,transparent_40%)] bg-[length:2px_2px]" />
      </span>
      {children}
    </div>
  );
}

const Sep = () => (
  <span className="flex w-[6px] flex-none justify-center py-[2px]">
    <span className="w-px bg-[#333]" />
  </span>
);

function Tools({ items }: { items: [string, string][] }) {
  return <>{items.map(([n, l]) => <IconButton key={n} name={n} label={l} className="w-[23px]" />)}</>;
}

function Combo({ label, value, width, pad = "pl-[18px]", disabled, lead }: { label: string; value: string; width: string; pad?: string; disabled?: boolean; lead?: React.ReactNode }) {
  return (
    <label className={`${width} flex flex-none items-center border border-[#bcbcbc] ${disabled ? "bg-[#cbcbcb] text-[#808080]" : "bg-[#e2e2e2] text-black"}`}>
      {lead}
      <select aria-label={label} disabled={disabled} className={`min-w-0 flex-1 appearance-none bg-transparent opacity-100 outline-none ${pad}`}>
        <option>{value}</option>
      </select>
      <svg viewBox="0 0 8 5" className="mr-[3px] w-[7px] flex-none" fill="none" stroke={disabled ? "#b5b5b5" : "#444"} aria-hidden="true">
        <path d="M.5.5L4 4 7.500.5" />
      </svg>
    </label>
  );
}

function Toolbars() {
  return (
    <div className="flex flex-col gap-[3px] bg-[#f0f0f0] py-1 text-black">
      <div className="flex gap-px">
        <Toolbar label="Dimension">
          <Tools items={[["dimLinear", "Linear"], ["dimAligned", "Aligned"], ["dimArc", "Arc length"], ["dimOrd", "Ordinate"]]} />
          <Sep />
          <Tools items={[["dimRadius", "Radius"], ["dimJog", "Jogged"], ["dimDia", "Diameter"], ["dimAng", "Angular"]]} />
          <Sep />
          <Tools items={[["quickDim", "Quick dimension"], ["dimBase", "Baseline"], ["dimCont", "Continue"], ["dimSpace", "Dimension space"], ["dimBreak", "Dimension break"]]} />
          <Sep />
          <Tools items={[["tolerance", "Tolerance"], ["center", "Center mark"], ["inspect", "Inspection"], ["jogged", "Jogged linear"]]} />
          <Sep />
          <Tools items={[["dimEdit", "Dimension edit"], ["dimText", "Dimension text edit"], ["dimUpdate", "Dimension update"]]} />
          <Sep />
          <Combo label="Dimension style" value="x_K&W_001" width="w-[120px]" />
          <Tools items={[["dimStyle", "Dimension style manager"]]} />
        </Toolbar>
        <Toolbar label="Draw order">
          <Tools items={[["front", "Bring to front"], ["back", "Send to back"], ["above", "Bring above"], ["under", "Send under"]]} />
          <Sep />
          <Tools items={[["textFront", "Text to front"], ["hatchBack", "Hatch to back"]]} />
        </Toolbar>
        <Toolbar label="Multileader">
          <Tools items={[["leader", "Multileader"], ["leaderAdd", "Add leader"], ["leaderDel", "Remove leader"]]} />
          <Sep />
          <Tools items={[["leaderAlign", "Align multileaders"], ["leaderCollect", "Collect multileaders"]]} />
          <Sep />
          <Combo label="Multileader style" value="x_KW_Standard" width="w-[120px]" />
          <Tools items={[["leaderStyle", "Multileader style manager"]]} />
        </Toolbar>
      </div>
      <div className="flex gap-px">
        <Toolbar label="Layers">
          <Tools items={[["layerMgr", "Layer properties manager"]]} />
          <Combo
            label="Layer"
            value="0"
            width="ml-[2px] w-[298px]"
            pad="pl-[5px]"
            lead={
              <span className="flex items-center pl-px">
                <Icon name="bulb" /><Icon name="sun" /><Icon name="vpFreeze" />
                <span className="ml-[2px] flex"><Icon name="unlock" /></span>
                <span className="size-[10px] border border-black bg-white" />
              </span>
            }
          />
          <Tools items={[["makeCurrent", "Make layer current"], ["layPrev", "Layer previous"], ["layStates", "Layer states"]]} />
        </Toolbar>
        <Toolbar label="Properties">
          <Combo label="Color" value="ByLayer" width="w-[148px]" pad="pl-[4px]" lead={<span className="ml-[5px] size-[10px] border border-black bg-white" />} />
          <Sep />
          <Combo label="Linetype" value="pE" width="w-[162px]" pad="pl-[5px]" lead={<span className="ml-1 flex gap-1"><span className="h-px w-[29px] bg-black" /><span className="h-px w-[26px] bg-black" /></span>} />
          <Sep />
          <Combo label="Lineweight" value="ByLayer" width="w-[125px]" pad="pl-[5px]" lead={<span className="ml-1 h-px w-[35px] bg-black" />} />
          <Sep />
          <Combo label="Plot style" value="ByColor" width="w-[120px]" pad="pl-[9px]" disabled />
        </Toolbar>
        <Toolbar label="Styles">
          <Tools items={[["textStyle", "Text style manager"]]} />
          <Combo label="Text style" value="STANDARD" width="w-[120px]" />
          <Sep />
          <Tools items={[["dimStyle", "Dimension styles"]]} />
          <Combo label="Dimension style" value="x_K&W_001" width="w-[120px]" />
          <Sep />
          <Tools items={[["tableStyle", "Table styles"]]} />
          <Combo label="Table style" value="Standard" width="w-[120px]" pad="pl-[4px]" />
          <Sep />
          <Tools items={[["leaderStyle", "Multileader styles"]]} />
          <Combo label="Multileader style" value="x_KW_Standard" width="w-[120px]" />
        </Toolbar>
      </div>
    </div>
  );
}

/* ---------- Model space ---------- */

function ParcelLabel({ place, lines }: { place: string; lines: string[] }) {
  return (
    <div className={`absolute ${place} w-20 text-center font-['DejaVu_Sans',sans-serif] text-[8px] leading-[10px] text-[#e4e4f2]`}>
      {lines.map((l) => <p key={l}>{l}</p>)}
    </div>
  );
}

function Canvas() {
  const compass = "absolute font-['Liberation_Sans',sans-serif] text-[13px] font-bold leading-none text-[#b4b4c8]";
  return (
    <main className="relative min-h-0 flex-1 overflow-hidden bg-[#00002d]">
      <div className="absolute left-[3px] top-[5px] text-xs text-[#d5d5e2]">[−][Top][2D Wireframe]</div>
      <svg className="absolute inset-0 h-full w-full" fill="none" stroke="#86864a" shapeRendering="crispEdges" strokeDasharray="71 6 9 5 9 5" aria-label="Parcel boundaries">
        <path d="M569.500 258.500H931" strokeDashoffset="34" />
        <path d="M569.500 258.500V659" strokeDashoffset="35" />
        <path d="M569.500 659.500H1467" strokeDashoffset="15" />
        <path d="M931.500 48.500V258" />
        <path d="M931.500 258V659" strokeDasharray="89 2 12 2" strokeDashoffset="99" />
        <path d="M931.500 48.500H1467" strokeDashoffset="60" />
        <path d="M1467.500 48.500V659" strokeDashoffset="0" />
      </svg>
      <ParcelLabel place="left-[1159px] top-[350px]" lines={["1", "40,597.66 S.F.", "0.93 AC."]} />
      <ParcelLabel place="left-[710px] top-[455px]" lines={["2", "17,968.85 S.F.", "0.41 AC."]} />

      <div className="absolute right-[8px] top-[8px] h-[80px] w-[76px]">
        <span className="absolute left-[3px] top-[5px] size-[70px] rounded-full border-8 border-[#2a2a58]" />
        <span className={`${compass} left-[33px] top-0`}>N</span>
        <span className={`${compass} left-[33px] top-[66px]`}>S</span>
        <span className={`${compass} left-0 top-[33px]`}>W</span>
        <span className={`${compass} right-0 top-[33px]`}>E</span>
        <button className="absolute left-[23px] top-[25px] flex size-[30px] items-center justify-center border border-[#c2c2d0] bg-[#b1b1c2]">
          <span className="flex size-[18px] items-center justify-center bg-[#a3a3b8] text-[8px] font-semibold text-[#34344e]">TOP</span>
        </button>
      </div>
      <button className="absolute right-[23px] top-[99px] flex h-[18px] w-[48px] items-center gap-[7px] rounded-[4px] border border-[#a2a2bd] bg-[#7d7d9d] pl-[3px] font-['Liberation_Sans',sans-serif] text-[11px] text-[#45456a]">
        WCS
        <span className="h-px w-[7px] bg-[#b9b9cf]" />
      </button>

      <svg viewBox="0 0 96 96" className="absolute bottom-0 left-0 size-24" fill="none" stroke="#e8e8f4" aria-label="UCS icon">
        <path d="M18.500 27v50.500H69M14.500 72.500h9v9h-9z" shapeRendering="crispEdges" />
        <text x="26" y="22" textAnchor="middle" fill="#e8e8f4" stroke="none" fontSize="18" fontWeight="300" fontFamily="Open Sans, sans-serif">Y</text>
        <text x="79" y="76" textAnchor="middle" fill="#e8e8f4" stroke="none" fontSize="18" fontWeight="300" fontFamily="Open Sans, sans-serif">X</text>
      </svg>
    </main>
  );
}

/* ---------- Command window ---------- */

const history = [
  "Automatic save to C:\\Users\\gdice\\appdata\\local\\temp\\Drawing3_1_23187_0456.sv$ ...",
  "Command:",
  "**** System Variable Changed ****",
  "1 of the monitored system variables has changed from the preferred value. Use SYSVARMONITOR command to view changes.",
  "Command:",
  "Command:",
  "Command: _open",
  "Command: *Cancel*",
];

function CommandWindow() {
  return (
    <section className="flex border-t-2 border-[#f0f0f0] font-['DejaVu_Sans_Mono',monospace] text-xs">
      <div className="flex w-[23px] flex-none flex-col items-center border-x border-t border-[#777] bg-linear-to-b from-[#8e8e8e] to-[#3d3d3d] pt-[3px]">
        <span className="h-[5px] w-[17px] bg-[radial-gradient(#c5c5c5_45%,transparent_50%)] bg-[length:3px_3px]" />
        <button aria-label="Close command line" className="mt-2">
          <svg viewBox="0 0 10 10" className="size-[10px]"><path d="M1 1l8 8M9 1L1 9" stroke="#fff" strokeWidth="1.800" /></svg>
        </button>
        <button aria-label="Customize" className="mt-[9px]"><Icon name="wrench" /></button>
      </div>
      <div className="flex min-w-0 flex-1 flex-col border-t border-[#777]">
        <div className="whitespace-pre bg-[#24481b] pb-[2px] pl-[2px] pt-[10px] leading-[15px] text-[#f2f5ee]">
          {history.map((l, i) => <p key={i}>{l}</p>)}
        </div>
        <div className="flex h-[23px] items-center border-b border-[#777] bg-white pl-[5px]">
          <button aria-label="Recent commands" className="flex items-center gap-[3px]">
            <svg viewBox="0 0 16 14" className="h-[14px] w-4" fill="none"><path d="M.5.500h15v13H.5z" fill="#dde3ec" stroke="#8b93a0" /><path d="M3 3.500l4 3.500-4 3.500M8 11h5" stroke="#333" /></svg>
            <Tri size="w-[6px]" />
          </button>
          <input aria-label="Command" placeholder="Type a command" className="ml-[7px] flex-1 italic outline-none placeholder:text-[#8a8a8a]" />
        </div>
      </div>
    </section>
  );
}

/* ---------- Status bar ---------- */

function Cell({ width, icon, label, text, menu, tail, className = "justify-center" }: { width: string; icon?: string; label: string; text?: string; menu?: boolean; tail?: string; className?: string }) {
  return (
    <button aria-label={label} className={`${width} flex flex-none items-center gap-1 whitespace-nowrap ${className}`}>
      {icon && <Icon name={icon} />}
      {text && <span>{text}</span>}
      {menu && <Tri size="w-[7px]" />}
      {tail && <Icon name={tail} />}
    </button>
  );
}

function StatusBar() {
  return (
    <footer className="flex h-7 items-stretch bg-[#b2b2b2] text-xs text-black">
      <div className="flex items-start pl-[10px]">
        <button className="h-[18px] w-[62px] bg-white font-bold leading-[18px] [clip-path:polygon(0_0,100%_0,96%_20%,92%_80%,86%_100%,18%_100%,11%_85%,6%_20%)]">Model</button>
        <button className="h-[18px] w-[67px] bg-[#dedede] pr-[6px] leading-[18px] text-[#6b6b6b] [clip-path:polygon(3%_0,100%_0,96%_20%,92%_80%,86%_100%,14%_100%,7%_85%,0_20%)]">Layout1</button>
        <button aria-label="New layout" className="flex h-[17px] w-[23px] items-center justify-center bg-[#e6e6e6] [clip-path:polygon(15%_0,100%_0,95%_50%,78%_100%,0_100%,5%_40%)]">
          <svg viewBox="0 0 8 8" className="size-2"><path d="M4 0v8M0 4h8" stroke="#444" strokeWidth="2" /></svg>
        </button>
      </div>
      <div className="ml-auto flex items-stretch bg-[#ebebeb]">
        <Cell width="w-[26px]" icon="ucs" label="UCS" />
        <Cell width="w-[24px]" icon="ucsIso" label="Isometric" />
        <Cell width="w-[58px]" icon="aniso" label="Vertical exaggeration" text="1x" menu />
        <Cell width="w-[88px]" icon="globe" label="Coordinate system" text="PA83-SF" menu />
        <Cell width="w-[117px]" icon="sheet" label="Viewport scale" text="1 : 405.133" menu tail="lock" />
        <Cell width="w-[148px]" label="Coordinates" text="5076.77, 6074.50, 0.00" className="justify-end pr-1" />
        <Cell width="w-[54px]" label="Model space" text="MODEL" />
        <Cell width="w-[26px]" icon="dyn" label="Dynamic input" />
        <Cell width="w-[24px]" icon="ortho" label="Ortho" />
        <Cell width="w-[38px]" icon="polar" label="Polar tracking" menu />
        <Cell width="w-[26px]" icon="otrack" label="Object tracking" />
        <Cell width="w-[24px]" icon="lwt" label="Lineweight" />
        <Cell width="w-[26px]" icon="cycling" label="Selection cycling" />
        <Cell width="w-[28px]" icon="annoBlue" label="Annotation visibility" />
        <Cell width="w-[22px]" icon="annoAuto" label="Auto scale" />
        <Cell width="w-[24px]" icon="anno" label="Annotation" />
        <Cell width="w-[62px]" label="Annotation scale" text={"1\" = 20'"} menu />
        <Cell width="w-[28px]" icon="plus" label="Workspace" />
        <Cell width="w-[24px]" icon="ruler" label="Units" />
        <label className="flex w-[76px] flex-none items-center pl-[6px] pr-[6px]">
          <select aria-label="Drawing units" className="min-w-0 flex-1 appearance-none bg-transparent outline-none"><option>Decimal</option></select>
          <Tri size="w-[7px]" />
        </label>
        <Cell width="w-[42px]" icon="quickProps" label="Lock UI" menu />
        <Cell width="w-[26px]" icon="graphics" label="Graphics performance" />
        <Cell width="w-[28px]" icon="layersStack" label="Surface" />
        <Cell width="w-[34px]" label="Elevation" text="3.50" />
        <Cell width="w-[36px]" icon="graph" label="System monitor" />
        <Cell width="w-[22px]" icon="warn" label="Warnings" />
        <Cell width="w-[29px]" icon="menu" label="Customization" className="justify-end pr-[3px]" />
      </div>
    </footer>
  );
}

export default function App() {
  return (
    <div className="flex h-screen min-h-0 flex-col overflow-hidden bg-[#f0f0f0] font-['Open_Sans','Noto_Sans',sans-serif] text-[11px] leading-4">
      <TitleBar />
      <MenuBar />
      <RibbonTabs />
      <Ribbon />
      <FileTabs />
      <Toolbars />
      <Canvas />
      <CommandWindow />
      <StatusBar />
    </div>
  );
}
